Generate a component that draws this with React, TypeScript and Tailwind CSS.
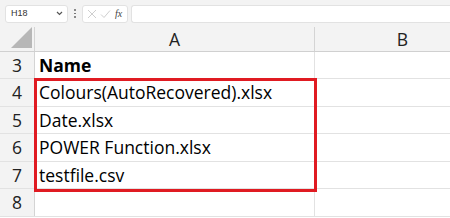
import React from "react";

const ROWS: { n: number; text: string; bold?: boolean; h: string }[] = [
  { n: 3, text: "Name", bold: true, h: "h-[27px]" },
  { n: 4, text: "Colours(AutoRecovered).xlsx", h: "h-[28px]" },
  { n: 5, text: "Date.xlsx", h: "h-[27px]" },
  { n: 6, text: "POWER Function.xlsx", h: "h-[28px]" },
  { n: 7, text: "testfile.csv", h: "h-[27px]" },
  { n: 8, text: "", h: "h-[28px]" },
];

const cellFont = { fontFamily: '"Open Sans", "Noto Sans", sans-serif' };

function Toolbar() {
  return (
    <div className="flex h-[27px] items-center bg-[#f3f3f3] pl-[5px]">
      <div className="flex h-[18px] w-[63px] items-center justify-between rounded-[3px] border border-[#e2e2e2] bg-white pl-[5px] pr-[4px]">
        <span className="text-[9px] text-[#333]" style={{ fontFamily: '"Liberation Sans", sans-serif' }}>
          H18
        </span>
        <svg width="7" height="5" viewBox="0 0 7 5">
          <path d="M1 1 L3.5 3.5 L6 1" fill="none" stroke="#555" strokeWidth="1.2" />
        </svg>
      </div>
      <div className="flex w-[14px] flex-col items-center gap-[2px]">
        <span className="h-[1.5px] w-[1.5px] rounded-full bg-[#666]" />
        <span className="h-[1.5px] w-[1.5px] rounded-full bg-[#666]" />
        <span className="h-[1.5px] w-[1.5px] rounded-full bg-[#666]" />
      </div>
      <div className="flex h-[18px] w-[46px] items-center gap-[3px] rounded-[3px] border border-[#e2e2e2] bg-white pl-[4px]">
        <svg width="10" height="10" viewBox="0 0 10 10">
          <path d="M1 1 L9 9 M9 1 L1 9" stroke="#cfcfcf" strokeWidth="1" />
        </svg>
        <svg width="11" height="10" viewBox="0 0 11 10">
          <path d="M1 5.5 L4 8.5 L10 1.5" fill="none" stroke="#cfcfcf" strokeWidth="1" />
        </svg>
        <span
          className="ml-[1px] text-[10px] italic text-[#444]"
          style={{ fontFamily: '"Liberation Serif", serif' }}
        >
          fx
        </span>
      </div>
      <div className="ml-[3px] h-[18px] flex-1 rounded-l-[3px] border border-r-0 border-[#e2e2e2] bg-white" />
    </div>
  );
}

export default function App() {
  return (
    <div className="h-[218px] w-[450px] overflow-hidden bg-white">
      <Toolbar />
      <div className="relative">
        <div className="flex h-[25px] border-b border-[#d0d0d0] bg-[#f3f3f3]">
          <div className="relative w-[35px] shrink-0 border-r border-[#d4d4d4]">
            <svg className="absolute right-[2px] bottom-[3px]" width="21" height="21" viewBox="0 0 21 21">
              <path d="M21 0 L21 21 L0 21 Z" fill="#b7b7b7" />
            </svg>
          </div>
          <div
            className="flex w-[280px] shrink-0 items-center justify-center border-r border-[#d4d4d4] text-[17.5px] text-[#222]"
            style={cellFont}
          >
            A
          </div>
          <div className="flex w-[175px] shrink-0 items-center justify-center text-[17.5px] text-[#222]" style={cellFont}>
            B
          </div>
        </div>
        {ROWS.map((r) => (
          <div key={r.n} className={`flex ${r.h} border-b border-[#e2e2e2]`}>
            <div
              className="flex w-[35px] shrink-0 items-center justify-center border-r border-[#d4d4d4] bg-[#f3f3f3] text-[17.5px] text-[#222]"
              style={cellFont}
            >
              {r.n}
            </div>
            <div
              className={`flex w-[280px] shrink-0 items-center border-r border-[#e2e2e2] pl-[4px] text-[17.5px] text-black ${
                r.bold ? "font-bold" : ""
              }`}
              style={cellFont}
            >
              {r.text}
            </div>
            <div className="w-[175px] shrink-0" />
          </div>
        ))}
        <div className="pointer-events-none absolute left-[34px] top-[51px] h-[114px] w-[283px] border-[3px] border-[#e01b22]" />
      </div>
    </div>
  );
}
